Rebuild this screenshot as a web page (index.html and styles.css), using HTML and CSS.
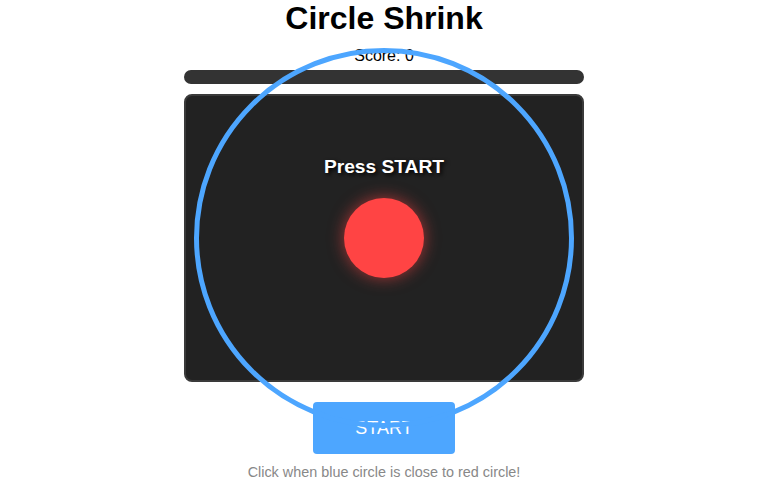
FILE: index.html
```html
<!DOCTYPE html>
<html>
<head>
<meta charset="utf-8">
<link rel="stylesheet" href="styles.css">
</head>
<body>
<div class="page">
  <h1 class="title">Circle Shrink</h1>
  <div class="score">Score: 0</div>
  <div class="bar"></div>
  <div class="game">
    <div class="message">Press START</div>
    <div class="target"></div>
    <div class="ring"></div>
  </div>
  <button class="start">START</button>
  <div class="hint">Click when blue circle is close to red circle!</div>
</div>
</body>
</html>
```

FILE: styles.css
```css
html, body {
  margin: 0;
  padding: 0;
  background: #ffffff;
  font-family: "Liberation Sans", Arial, sans-serif;
}
.page {
  display: flex;
  flex-direction: column;
  align-items: center;
  width: 768px;
}
.title {
  margin: 0;
  font-size: 32px;
  font-weight: bold;
  line-height: 37px;
  color: #000;
}
.score {
  margin-top: 10px;
  font-size: 16px;
  line-height: 18px;
  color: #000;
}
.bar {
  margin-top: 5px;
  width: 400px;
  height: 14px;
  border-radius: 7px;
  background: #333333;
}
.game {
  position: relative;
  margin-top: 10px;
  width: 400px;
  height: 288px;
  box-sizing: border-box;
  background: #222222;
  border: 2px solid #3a3a3a;
  border-radius: 8px;
  display: flex;
  align-items: center;
  justify-content: center;
}
.message {
  position: absolute;
  top: 60px;
  left: 0;
  right: 0;
  text-align: center;
  color: #ffffff;
  font-size: 19.2px;
  font-weight: bold;
  line-height: 22px;
  text-shadow: 2px 2px 4px #000;
}
.target {
  width: 80px;
  height: 80px;
  border-radius: 50%;
  background: #ff4444;
  box-shadow: 0 0 16px rgba(255, 68, 68, 0.6);
}
.ring {
  position: absolute;
  left: 50%;
  top: 50%;
  width: 380px;
  height: 380px;
  margin-left: -190px;
  margin-top: -190px;
  box-sizing: border-box;
  border: 5px solid #4da6ff;
  border-radius: 50%;
  z-index: 5;
  pointer-events: none;
}
.start {
  margin-top: 20px;
  width: 142px;
  height: 52px;
  padding: 0;
  border: none;
  border-radius: 4px;
  background: #4da6ff;
  color: #ffffff;
  font-family: "Liberation Sans", Arial, sans-serif;
  font-size: 18px;
  line-height: 21px;
}
.hint {
  margin-top: 10px;
  font-size: 14.4px;
  line-height: 16px;
  color: #888888;
}
```
